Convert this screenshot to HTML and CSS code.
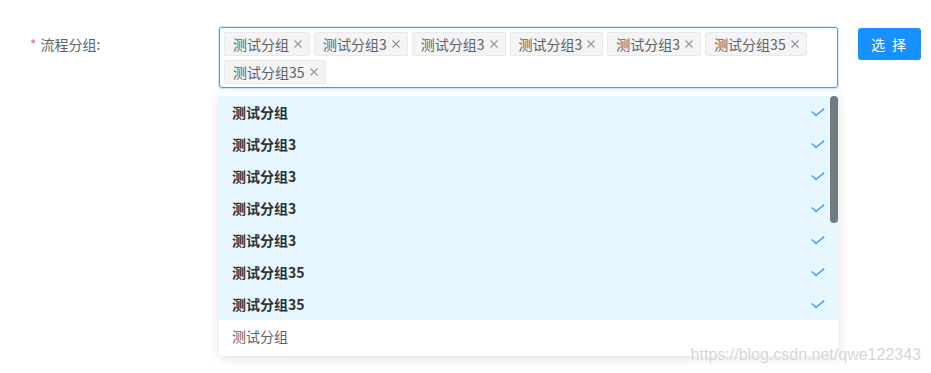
FILE: index.html
```html
<!DOCTYPE html>
<html lang="zh-CN">
<head>
    <meta charset="UTF-8">
    <title>流程分组</title>
    <link rel="stylesheet" href="styles.css">
</head>
<body>
    <div class="form-row">
        <div class="form-label"><span class="required">*</span>流程分组:</div>
        <div class="select">
            <div class="select-box">
                <span class="tag">测试分组<i class="tag-close"></i></span>
                <span class="tag">测试分组3<i class="tag-close"></i></span>
                <span class="tag">测试分组3<i class="tag-close"></i></span>
                <span class="tag">测试分组3<i class="tag-close"></i></span>
                <span class="tag">测试分组3<i class="tag-close"></i></span>
                <span class="tag">测试分组35<i class="tag-close"></i></span>
                <span class="tag">测试分组35<i class="tag-close"></i></span>
            </div>
            <ul class="dropdown">
                <li class="option selected">测试分组<i class="check"></i></li>
                <li class="option selected">测试分组3<i class="check"></i></li>
                <li class="option selected">测试分组3<i class="check"></i></li>
                <li class="option selected">测试分组3<i class="check"></i></li>
                <li class="option selected">测试分组3<i class="check"></i></li>
                <li class="option selected">测试分组35<i class="check"></i></li>
                <li class="option selected">测试分组35<i class="check"></i></li>
                <li class="option">测试分组</li>
                <div class="scrollbar"></div>
            </ul>
        </div>
        <button class="btn-primary">选 择</button>
    </div>

    <div class="watermark">https://blog.csdn.net/qwe122343</div>

    <script>
        const closeSvg = '<svg width="8" height="8" viewBox="0 0 8 8"><path d="M0.5 0.5 L7.5 7.5 M7.5 0.5 L0.5 7.5" stroke="#909399" stroke-width="1.1" fill="none"/></svg>';
        const checkSvg = '<svg width="14" height="9" viewBox="0 0 14 9"><polyline points="0.8,3.4 5,7.6 13.2,0.6" stroke="#409eff" stroke-width="1.4" fill="none"/></svg>';

        document.querySelectorAll('.tag-close').forEach(el => el.innerHTML = closeSvg);
        document.querySelectorAll('.check').forEach(el => el.innerHTML = checkSvg);
    </script>
</body>
</html>
```

FILE: styles.css
```css
body {
    margin: 0;
    height: 100vh;
    background: #fff;
    font-family: "Noto Sans CJK SC", "Noto Sans", sans-serif;
    font-size: 14px;
    color: #606266;
    overflow: hidden;
    position: relative;
}

.form-row {
    display: flex;
    align-items: flex-start;
    padding: 27px 0 0 30px;
}

.form-label {
    width: 189px;
    height: 34px;
    line-height: 34px;
    font-size: 14px;
    color: #606266;
}

.required {
    color: #f56c6c;
    margin-right: 4px;
}

.select {
    position: relative;
    width: 619px;
}

.select-box {
    box-sizing: border-box;
    height: 61px;
    border: 1px solid #409eff;
    border-radius: 3px;
    box-shadow: 0 0 0 1px rgba(64, 158, 255, 0.25);
    padding: 4px 20px 0 4px;
    display: flex;
    flex-wrap: wrap;
    align-content: flex-start;
    gap: 4px;
}

.tag {
    box-sizing: border-box;
    height: 24px;
    display: inline-flex;
    align-items: center;
    padding: 0 5px 0 8px;
    background: #f4f4f5;
    border: 1px solid #e9e9eb;
    border-radius: 2px;
    font-size: 14px;
    color: #606266;
    white-space: nowrap;
}

.tag-close {
    display: inline-flex;
    width: 12px;
    height: 12px;
    margin-left: 3px;
    align-items: center;
    justify-content: center;
}

.dropdown {
    position: absolute;
    top: 65px;
    left: 0;
    right: 0;
    margin: 0;
    padding: 4px 0;
    list-style: none;
    background: #fff;
    border-radius: 4px;
    box-shadow: 0 2px 12px rgba(0, 0, 0, 0.12);
    z-index: 5;
}

.option {
    height: 32px;
    line-height: 32px;
    padding: 0 13px;
    display: flex;
    align-items: center;
    justify-content: space-between;
    font-size: 14px;
    color: #606266;
}

.option.selected {
    background: #e6f7ff;
    color: #303133;
    font-weight: bold;
}

.check {
    display: inline-flex;
    width: 14px;
    height: 9px;
}

.scrollbar {
    position: absolute;
    top: 4px;
    right: 0;
    width: 8px;
    height: 127px;
    background: #737a7d;
    border-radius: 4px;
}

.btn-primary {
    margin-left: 20px;
    margin-top: 1px;
    width: 63px;
    height: 32px;
    border: none;
    border-radius: 3px;
    background: #1890ff;
    color: #fff;
    font-family: "Noto Sans CJK SC", "Noto Sans", sans-serif;
    font-size: 14px;
    letter-spacing: 2px;
    cursor: pointer;
}

.watermark {
    position: absolute;
    right: 10px;
    bottom: 9px;
    font-family: "Liberation Sans", Arial, sans-serif;
    font-size: 16px;
    color: #d6d6d6;
    text-shadow: 0 0 2px #fff, 0 0 1px #fff;
    z-index: 10;
}
```
